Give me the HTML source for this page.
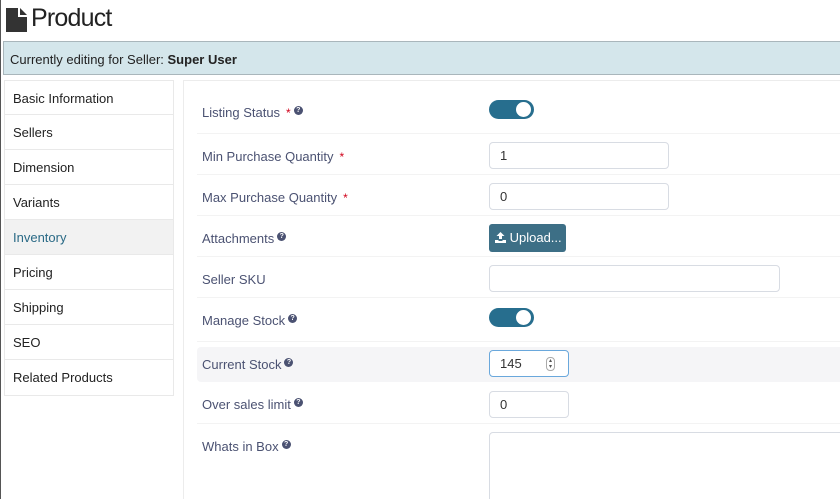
<!DOCTYPE html>
<html><head><style>
*{box-sizing:border-box;margin:0;padding:0}
html,body{width:840px;height:499px;overflow:hidden}
body{background:#fff;font-family:"Liberation Sans",sans-serif;position:relative}
.a{position:absolute}
.side div{position:absolute;left:4px;width:170px;height:35px;border:1px solid #e9e9e9;border-top:none;background:#fff;font-size:13px;color:#222;padding:10px 0 0 8px}
.lbl{position:absolute;left:202px;font-size:13px;color:#4b5272}
.req{color:#d0021b;font-size:12px;margin-left:6px}
.q{display:inline-block;width:9px;height:9px;border-radius:50%;background:#4b5272;color:#fff;font-size:7px;line-height:9px;text-align:center;font-weight:bold;vertical-align:5px;margin-left:3px}
.sep{position:absolute;left:197px;width:643px;height:1px;background:#f3f3f3}
.inp{position:absolute;left:489px;height:27px;border:1px solid #d8dce3;border-radius:4px;background:#fff;font-size:13px;color:#333;padding:5px 0 0 10px}
.tog{position:absolute;left:489px;width:45px;height:19px;border-radius:10px;background:#276e8e}
.tog:after{content:"";position:absolute;right:3px;top:2px;width:15px;height:15px;border-radius:50%;background:#fff}
</style></head><body>
<div class="a" style="left:0;top:0;width:1px;height:499px;background:#555"></div>
<svg class="a" style="left:6px;top:8px" width="21" height="24" viewBox="0 0 21 24"><path d="M0 0H12V9H21V24H0Z" fill="#333"/><path d="M14 0L21 7H14Z" fill="#333"/></svg>
<div class="a" style="left:31px;top:4px;font-size:25px;color:#222;letter-spacing:-0.8px">Product</div>
<div class="a" style="left:3px;top:41px;width:840px;height:34px;background:#d4e6eb;border:1px solid #a9b6bb;font-size:13px;color:#222;padding:10px 0 0 6px">Currently editing for Seller: <b>Super User</b></div>
<div class="side">
<div style="top:80px;border-top:1px solid #e9e9e9">Basic Information</div>
<div style="top:115px">Sellers</div>
<div style="top:150px">Dimension</div>
<div style="top:185px">Variants</div>
<div style="top:220px;background:#f2f2f2;color:#2a6a86">Inventory</div>
<div style="top:255px">Pricing</div>
<div style="top:290px">Shipping</div>
<div style="top:325px">SEO</div>
<div style="top:360px;height:36px">Related Products</div>
</div>
<div class="a" style="left:183px;top:80px;width:660px;height:430px;border:1px solid #ececec;border-right:none"></div>
<div class="lbl" style="top:105px">Listing Status<span class="req">*</span><span class="q">?</span></div>
<div class="tog" style="top:100px"></div>
<div class="sep" style="top:133px"></div>
<div class="lbl" style="top:149px">Min Purchase Quantity<span class="req">*</span></div>
<div class="inp" style="top:142px;width:180px">1</div>
<div class="sep" style="top:174px"></div>
<div class="lbl" style="top:190px">Max Purchase Quantity<span class="req">*</span></div>
<div class="inp" style="top:183px;width:180px">0</div>
<div class="sep" style="top:215px"></div>
<div class="lbl" style="top:231px">Attachments<span class="q">?</span></div>
<div class="a" style="left:489px;top:224px;width:77px;height:28px;border-radius:3px;background:#3d6f86;color:#fff;font-size:13px;padding:6px 0 0 6px"><svg width="11" height="11" viewBox="0 0 11 11" style="vertical-align:-1px"><path d="M5.5 0L9.5 4H7V7H4V4H1.5Z M0 8H3.5V9H7.5V8H11V11H0Z" fill="#fff"/></svg> Upload...</div>
<div class="sep" style="top:256px"></div>
<div class="lbl" style="top:272px">Seller SKU</div>
<div class="inp" style="top:265px;width:291px"></div>
<div class="sep" style="top:297px"></div>
<div class="lbl" style="top:313px">Manage Stock<span class="q">?</span></div>
<div class="tog" style="top:308px"></div>
<div class="sep" style="top:341px"></div>
<div class="a" style="left:197px;top:347px;width:643px;height:35px;background:#f5f5f7;border-radius:4px 0 0 4px"></div>
<div class="lbl" style="top:357px">Current Stock<span class="q">?</span></div>
<div class="inp" style="top:350px;width:80px;border-color:#6aa8dc">145<span class="a" style="left:56px;top:6px;width:9px;height:14px;border:1px solid #aaa;border-radius:4px;font-size:6px;line-height:6px;text-align:center;color:#555">▴<br>▾</span></div>
<div class="lbl" style="top:397px">Over sales limit<span class="q">?</span></div>
<div class="inp" style="top:391px;width:80px">0</div>
<div class="sep" style="top:423px"></div>
<div class="lbl" style="top:439px">Whats in Box<span class="q">?</span></div>
<div class="inp" style="top:432px;width:360px;height:80px"></div>
</body></html>
